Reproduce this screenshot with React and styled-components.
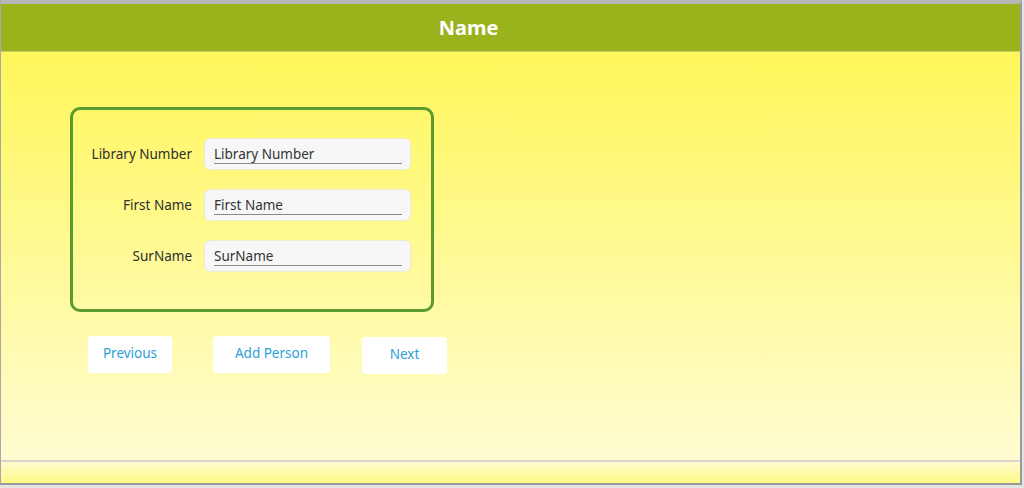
import React from "react";
import styled, { createGlobalStyle } from "styled-components";

const GlobalStyle = createGlobalStyle`
  html, body {
    margin: 0;
    padding: 0;
    background: #e4e4e4;
    font-family: "Noto Sans", "Noto Sans CJK JP", sans-serif;
  }
`;

export const Frame = styled.div`
  width: 1019px;
  height: 479px;
  border-top: 4px solid #b6b6b6;
  border-left: 1px solid #a8a8a8;
  border-right: 2px solid #9a9a9a;
  border-bottom: 2px solid #9a9a9a;
  display: flex;
  flex-direction: column;
`;

export const Header = styled.div`
  height: 47px;
  border-bottom: 1px solid #c8cc70;
  background: #9ab21c;
  color: #fff;
  font-size: 20px;
  font-weight: 700;
  display: flex;
  align-items: center;
  justify-content: center;
  padding-right: 84px;
`;

export const Main = styled.div`
  flex: 1;
  background: linear-gradient(#fff75a, #fffcd2);
  padding: 55px 0 0 69px;
  border-bottom: 2px solid #d9d8c8;
`;

export const Footer = styled.div`
  height: 21px;
  background: linear-gradient(#fffbd0, #fff985);
`;

export const FormBox = styled.div`
  width: 364px;
  height: 205px;
  box-sizing: border-box;
  border: 3px solid #5b9a2f;
  border-radius: 10px;
  padding-top: 28px;
  display: flex;
  flex-direction: column;
  gap: 19px;
`;

export const Row = styled.div`
  display: flex;
  align-items: center;
  gap: 12px;
  padding-left: ${(p) => p.shift || 0}px;
`;

export const Label = styled.label`
  width: 119px;
  text-align: right;
  font-size: 13.5px;
  color: #2e2e2e;
`;

export const Field = styled.div`
  width: 207px;
  height: 32px;
  box-sizing: border-box;
  background: #f7f7f7;
  border: 1px solid #ecebd8;
  border-radius: 6px;
  padding: 0 8px 0 9px;
  display: flex;
  align-items: center;
`;

export const Input = styled.input`
  width: 100%;
  border: none;
  border-bottom: 1px solid #8a8a8a;
  background: transparent;
  font-family: inherit;
  font-size: 13.5px;
  color: #333;
  padding: 0;
  height: 18px;
  line-height: 18px;
  outline: none;
`;

export const ButtonRow = styled.div`
  display: flex;
  align-items: flex-start;
  margin: 24px 0 0 18px;
`;

export const Button = styled.button`
  width: ${(p) => p.w}px;
  height: 37px;
  margin-left: ${(p) => p.gap || 0}px;
  margin-top: ${(p) => p.drop || 0}px;
  padding: 0 0 4px;
  border: none;
  border-radius: 4px;
  background: #fff;
  color: #2a9fd8;
  font-family: inherit;
  font-size: 13.5px;
  cursor: pointer;
`;

const fields = [
  { label: "Library Number", shift: 0 },
  { label: "First Name", shift: -1 },
  { label: "SurName", shift: -2 },
];

const App = () => {
  return (
    <>
      <GlobalStyle />
      <Frame>
        <Header>Name</Header>
        <Main>
          <FormBox>
            {fields.map((f) => (
              <Row key={f.label} shift={f.shift}>
                <Label>{f.label}</Label>
                <Field>
                  <Input defaultValue={f.label} />
                </Field>
              </Row>
            ))}
          </FormBox>
          <ButtonRow>
            <Button w={84}>Previous</Button>
            <Button w={117} gap={41}>
              Add Person
            </Button>
            <Button w={85} gap={32} drop={1}>
              Next
            </Button>
          </ButtonRow>
        </Main>
        <Footer />
      </Frame>
    </>
  );
};

export default App;
